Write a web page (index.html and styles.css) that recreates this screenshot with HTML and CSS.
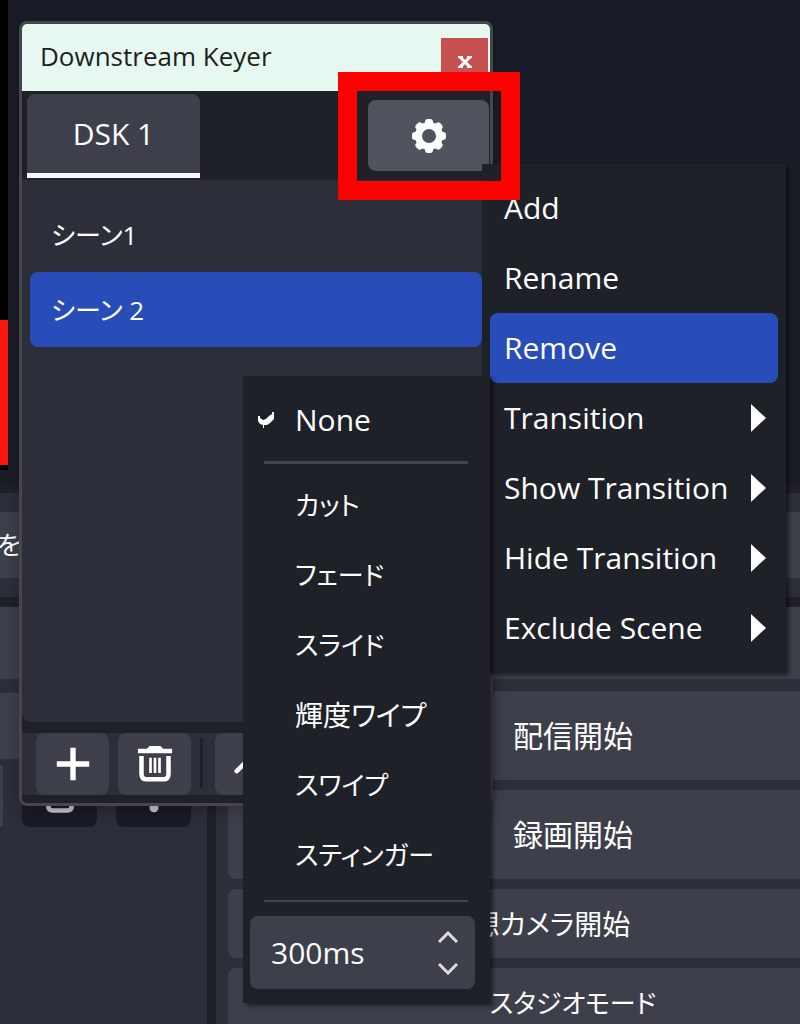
FILE: index.html
```html
<!DOCTYPE html>
<html lang="ja">
<head>
<meta charset="utf-8">
<meta name="viewport" content="width=device-width, initial-scale=1">
<title>Downstream Keyer</title>
<link rel="stylesheet" href="styles.css">
</head>
<body>
<div class="desktop">
  <main class="app">
    <div class="preview"><div class="canvas"><div class="source"></div></div></div>
    <div class="context-bar"><div class="context-field">を選</div></div>
    <div class="docks">
      <section class="dock sources">
        <div class="dock-title"></div>
        <div class="dock-row"></div>
        <div class="dock-tools">
          <button class="tool stub" aria-label="Add source"></button>
          <button class="tool" aria-label="Remove source">
            <svg class="icon" viewBox="0 0 40 40"><path d="M7 11V31Q7 36 12 36H28Q33 36 33 31V11" fill="none" stroke="currentColor" stroke-width="5"/><path d="M2 3H12L15 1H25L28 3H38V8H2Z" fill="currentColor"/><path d="M15 12V28M20 12V28M25 12V28" stroke="currentColor" stroke-width="3"/></svg>
          </button>
          <button class="tool" aria-label="More">
            <svg class="icon" viewBox="0 0 40 40"><circle cx="20" cy="7" r="5" fill="currentColor"/><circle cx="20" cy="20" r="5" fill="currentColor"/><circle cx="20" cy="33" r="5" fill="currentColor"/></svg>
          </button>
        </div>
      </section>
      <section class="dock controls">
        <div class="dock-title"></div>
        <div class="control-list">
          <button class="control">配信開始</button>
          <button class="control">録画開始</button>
          <button class="control short camera">仮想カメラ開始</button>
          <button class="control short kana">スタジオモード</button>
        </div>
      </section>
    </div>
  </main>

  <section class="window" aria-label="Downstream Keyer">
    <header class="titlebar">
      <h1 class="title">Downstream Keyer</h1>
      <button class="close" aria-label="Close"><svg width="16" height="12" viewBox="0 0 16 12"><path d="M1 1H6M10 1H15M1 11H6M10 11H15" fill="none" stroke="#fff" stroke-width="2"/><path d="M3 1L13 11M13 1L3 11" stroke="#fff" stroke-width="3"/></svg></button>
    </header>
    <div class="tabs">
      <button class="tab">DSK 1</button>
      <button class="settings" aria-label="Settings">
        <svg width="34" height="34" viewBox="0 0 34 34"><g fill="#fff"><rect x="13" y="0" width="8" height="34" rx="3"/><rect x="13" y="0" width="8" height="34" rx="3" transform="rotate(45 17 17)"/><rect x="13" y="0" width="8" height="34" rx="3" transform="rotate(90 17 17)"/><rect x="13" y="0" width="8" height="34" rx="3" transform="rotate(135 17 17)"/><circle cx="17" cy="17" r="14"/></g><circle cx="17" cy="17" r="7" fill="#4f535e"/></svg>
      </button>
    </div>
    <div class="scenes">
      <button class="scene kana">シーン1</button>
      <button class="scene selected kana">シーン 2</button>
    </div>
    <div class="toolbar">
      <button class="tool" aria-label="Add scene">
        <svg class="icon" viewBox="0 0 40 40"><path d="M20 2V38M2 20H38" stroke="currentColor" stroke-width="6"/></svg>
      </button>
      <button class="tool" aria-label="Remove scene">
        <svg class="icon" viewBox="0 0 40 40"><path d="M5 11V31Q5 37 11 37H29Q35 37 35 31V11" fill="none" stroke="currentColor" stroke-width="5"/><path d="M1 3H11L14 0H26L29 3H39V8H1Z" fill="currentColor"/><path d="M15 13V30M20 13V30M25 13V30" stroke="currentColor" stroke-width="3"/></svg>
      </button>
      <span class="divider"></span>
      <button class="tool" aria-label="Move up">
        <svg class="icon" viewBox="0 0 40 40"><path d="M3 28L20 11L37 28" fill="none" stroke="currentColor" stroke-width="5" stroke-linecap="round"/></svg>
      </button>
    </div>
  </section>

  <nav class="menu main-menu" aria-label="Settings menu">
    <button class="item">Add</button>
    <button class="item">Rename</button>
    <button class="item selected">Remove</button>
    <button class="item parent">Transition</button>
    <button class="item parent">Show Transition</button>
    <button class="item parent">Hide Transition</button>
    <button class="item parent">Exclude Scene</button>
  </nav>

  <nav class="menu sub-menu" aria-label="Transition">
    <button class="item choice"><svg class="check" width="18" height="18" viewBox="0 0 18 18"><path d="M1 5H3V7L6 9L9 8L12 5L15 3V1H17V8L13 12L10 14H7V17H6V14L3 13L1 10Z" fill="#fff"/></svg>None</button>
    <hr class="rule">
    <button class="item choice kana">カット</button>
    <button class="item choice kana">フェード</button>
    <button class="item choice kana">スライド</button>
    <button class="item choice mixed">輝度ワイプ</button>
    <button class="item choice kana">スワイプ</button>
    <button class="item choice kana">スティンガー</button>
    <hr class="rule thin">
    <div class="spin">
      <input class="duration" type="text" value="300ms" aria-label="Duration">
      <div class="steps">
        <button class="step" aria-label="Increase"><svg width="20" height="12" viewBox="0 0 20 12"><path d="M1 11L10 2L19 11" fill="none" stroke="#dcdde0" stroke-width="3"/></svg></button>
        <button class="step" aria-label="Decrease"><svg width="20" height="12" viewBox="0 0 20 12"><path d="M1 1L10 10L19 1" fill="none" stroke="#dcdde0" stroke-width="3"/></svg></button>
      </div>
    </div>
  </nav>

  <div class="highlight"></div>
</div>
</body>
</html>
```
FILE: styles.css
```css
:root {
  --dark: #1f2129;
  --panel: #2c2e39;
  --raised: #3d404b;
  --blue: #284cb8;
  --back: #1a1c27;
}

* { box-sizing: border-box; }

body {
  margin: 0;
  background: var(--panel);
  color: #fefefe;
  font: 30px/40px "Open Sans", "Noto Sans CJK JP", sans-serif;
  font-feature-settings: "palt";
}

button, input {
  margin: 0;
  padding: 0;
  border: 0;
  background: none;
  color: inherit;
  font: inherit;
  font-feature-settings: inherit;
}

.desktop {
  position: relative;
  height: 100vh;
  min-height: 1024px;
  overflow: hidden;
}

/* Main window behind the dialog */
.app {
  display: flex;
  flex-direction: column;
  height: 100%;
}

.preview {
  flex: none;
  height: 493px;
  background: var(--back);
  border-bottom: 8px solid var(--dark);
}

.canvas {
  width: 8px;
  height: 470px;
  padding-top: 320px;
  background: #000;
}

.source {
  height: 145px;
  background: #fb170e;
}

.context-bar {
  flex: none;
  padding: 19px 0;
  border-bottom: 10px solid var(--dark);
}

.context-field {
  height: 66px;
  padding: 14px 0;
  background: var(--raised);
  font-size: 26px;
  line-height: 38px;
  text-indent: -3px;
}

.docks {
  display: flex;
  flex: 1;
}

.sources {
  flex: none;
  width: 216px;
  border-right: 9px solid var(--dark);
}

.controls { flex: 1; }

.dock-title {
  height: 72px;
  background: var(--raised);
}

.dock-row {
  height: 66px;
  margin-top: 14px;
  background: var(--raised);
}

.dock-tools {
  display: flex;
  gap: 19px;
  padding-top: 6px;
}

.tool {
  display: grid;
  place-items: center;
  flex: none;
  width: 73px;
  height: 62px;
  border-radius: 8px;
  background: var(--raised);
}

.icon {
  width: 36px;
  height: 38px;
}

.dock-tools .tool {
  width: 75px;
  background: #191b26;
  color: #c3c5d1;
}

.dock-tools .stub {
  width: 3px;
  border-radius: 0 8px 8px 0;
  background: var(--raised);
}

.control-list {
  display: grid;
  gap: 10px;
  padding: 12px 0 0 12px;
}

.control {
  height: 89px;
  padding-left: 118px;
  border-radius: 8px 0 0 8px;
  background: var(--raised);
  white-space: nowrap;
}

.short { height: 69px; }

.camera {
  padding-left: 46px;
  font-size: 28px;
}

.kana { font-size: 26px; }
.mixed { font-size: 28px; }

/* Dialog */
.window {
  position: absolute;
  top: 21px;
  left: 19px;
  display: flex;
  flex-direction: column;
  width: 474px;
  height: 785px;
  overflow: hidden;
  border: 3px solid #46474c;
  border-radius: 8px;
  background: var(--dark);
  box-shadow: 0 4px 16px rgba(0, 0, 0, .25);
}

.titlebar {
  display: flex;
  justify-content: space-between;
  height: 67px;
  padding-left: 18px;
  background: #e7f8f0;
  color: #1c1f1e;
}

.title {
  margin: 0;
  font-size: 26px;
  font-weight: 400;
  line-height: 65px;
}

.close {
  display: grid;
  place-items: center;
  width: 47px;
  height: 48px;
  margin: 14px 2px 0 0;
  background: #c75050;
}

.tabs {
  display: flex;
  justify-content: space-between;
  height: 89px;
  padding: 3px 0 1px 5px;
}

.tab {
  width: 173px;
  height: 84px;
  border-bottom: 5px solid #f8f6f8;
  border-radius: 8px 8px 0 0;
  background: var(--raised);
}

.settings {
  display: grid;
  place-items: center;
  width: 121px;
  height: 71px;
  margin: 6px 1px 0 0;
  border-radius: 8px;
  background: #4f535e;
}

.scenes {
  flex: 1;
  padding: 17px 8px;
  border-radius: 0 0 8px 8px;
  background: var(--panel);
}

.scene {
  display: block;
  width: 100%;
  height: 75px;
  padding-left: 21px;
  border-radius: 8px;
  text-align: left;
}

.selected { background: var(--blue); }

.toolbar {
  display: flex;
  gap: 9px;
  margin: 11px 0 8px;
  padding-left: 14px;
  background: var(--panel);
}

.divider {
  width: 3px;
  margin: 5px 3px 7px 0;
  background: var(--dark);
}

/* Menus */
.menu {
  position: absolute;
  background: var(--dark);
  box-shadow: 3px 3px 4px rgba(0, 0, 0, .5);
}

.main-menu {
  top: 164px;
  left: 482px;
  width: 304px;
  padding: 9px 8px;
}

.item {
  display: flex;
  align-items: center;
  width: 100%;
  height: 70px;
  padding-left: 14px;
  border-radius: 8px;
  white-space: nowrap;
}

.parent {
  justify-content: space-between;
  padding-right: 12px;
}

.parent::after {
  content: "";
  width: 15px;
  height: 28px;
  background: #fff;
  clip-path: polygon(0 0, 100% 50%, 0 100%);
}

.sub-menu {
  top: 376px;
  left: 243px;
  width: 247px;
  padding: 9px 15px 14px 7px;
}

.choice {
  position: relative;
  padding-left: 45px;
}

.check {
  position: absolute;
  left: 7px;
}

.rule {
  height: 3px;
  margin: 6px 7px 6px 14px;
  border: 0;
  background: #41434f;
}

.thin {
  height: 2px;
  margin: 10px 7px 14px 14px;
}

.spin {
  display: flex;
  align-items: center;
  height: 73px;
  padding: 0 17px 0 21px;
  border-radius: 8px;
  background: var(--raised);
}

.duration {
  flex: 1;
  min-width: 0;
}

.steps {
  display: grid;
  gap: 20px;
}

.step {
  display: grid;
  line-height: 0;
}

.highlight {
  position: absolute;
  top: 72px;
  left: 338px;
  width: 182px;
  height: 128px;
  border: 19px solid #f00;
  pointer-events: none;
}
```
